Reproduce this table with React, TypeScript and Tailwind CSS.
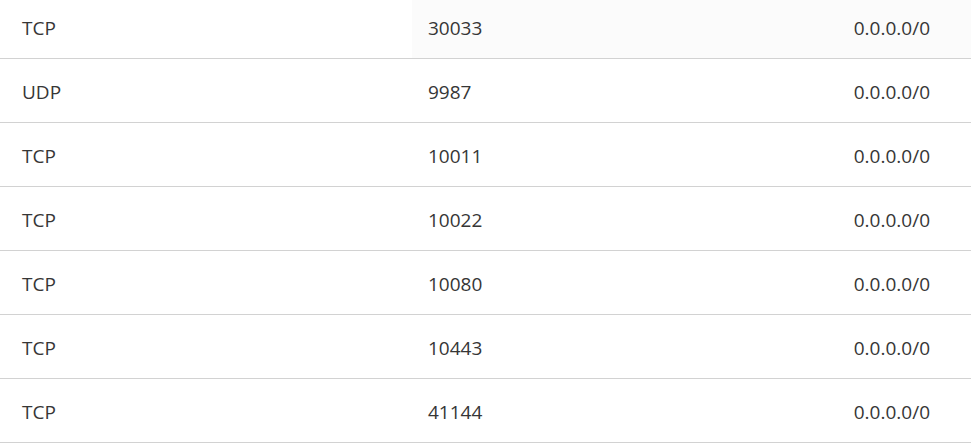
import React from "react";

const rows: [string, string, string][] = [
  ["TCP", "30033", "0.0.0.0/0"],
  ["UDP", "9987", "0.0.0.0/0"],
  ["TCP", "10011", "0.0.0.0/0"],
  ["TCP", "10022", "0.0.0.0/0"],
  ["TCP", "10080", "0.0.0.0/0"],
  ["TCP", "10443", "0.0.0.0/0"],
  ["TCP", "41144", "0.0.0.0/0"],
];

export default function App() {
  return (
    <div
      className="w-[971px] h-[446px] overflow-hidden bg-white text-[#363636] text-[19px]"
      style={{ fontFamily: '"Open Sans", "Noto Sans", sans-serif' }}
    >
      <div className="-mt-[5px]">
        {rows.map((r, i) => (
          <div
            key={i}
            className="flex h-[64px] border-b border-[#d2d2d2]"
          >
            <div className="w-[412px] pl-[22px] pt-[3px] flex items-center">{r[0]}</div>
            <div
              className={
                "flex-1 flex items-center pt-[3px] " + (i === 0 ? "bg-[#fbfbfb]" : "")
              }
            >
              <div className="flex-1 pl-[16px]">{r[1]}</div>
              <div className="pr-[41px] text-right">{r[2]}</div>
            </div>
          </div>
        ))}
      </div>
    </div>
  );
}
